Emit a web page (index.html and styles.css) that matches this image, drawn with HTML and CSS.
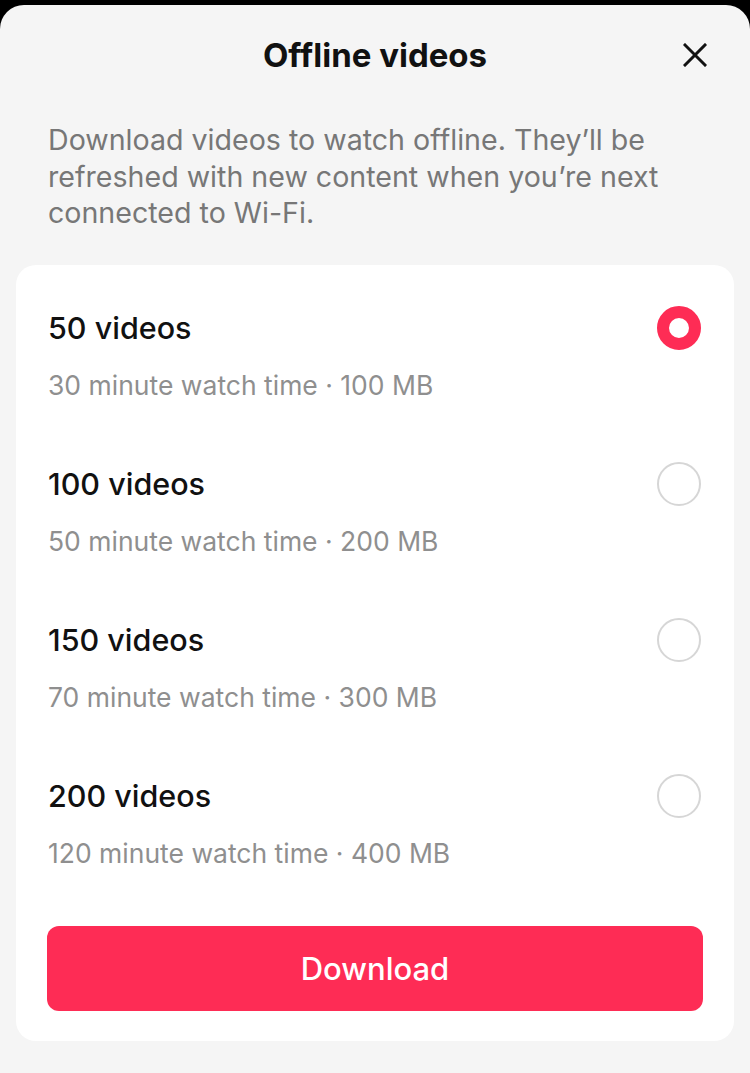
FILE: index.html
```html
<!DOCTYPE html>
<html lang="en">
<head>
<meta charset="utf-8">
<title>Offline videos</title>
<link rel="stylesheet" href="styles.css">
</head>
<body>
<div class="sheet">
  <header class="header">
    <h1 class="title">Offline videos</h1>
    <button class="close" aria-label="Close">
      <svg viewBox="0 0 24 24" width="24" height="24"><path d="M2 2 L22 22 M22 2 L2 22" stroke="#111" stroke-width="3" stroke-linecap="square" fill="none"/></svg>
    </button>
  </header>
  <p class="desc">Download videos to watch offline. They’ll be refreshed with new content when you’re next connected to Wi-Fi.</p>
  <section class="card">
    <div class="option">
      <div class="text">
        <div class="opt-title">50 videos</div>
        <div class="opt-sub">30 minute watch time · 100 MB</div>
      </div>
      <span class="radio selected"></span>
    </div>
    <div class="option">
      <div class="text">
        <div class="opt-title">100 videos</div>
        <div class="opt-sub">50 minute watch time · 200 MB</div>
      </div>
      <span class="radio"></span>
    </div>
    <div class="option">
      <div class="text">
        <div class="opt-title">150 videos</div>
        <div class="opt-sub">70 minute watch time · 300 MB</div>
      </div>
      <span class="radio"></span>
    </div>
    <div class="option">
      <div class="text">
        <div class="opt-title">200 videos</div>
        <div class="opt-sub">120 minute watch time · 400 MB</div>
      </div>
      <span class="radio"></span>
    </div>
    <button class="download">Download</button>
  </section>
</div>
</body>
</html>
```

FILE: styles.css
```css
html, body {
  margin: 0;
  padding: 0;
  background: #000;
  height: 100%;
}
body {
  font-family: Inter, Roboto, "Liberation Sans", sans-serif;
  padding-top: 5px;
  box-sizing: border-box;
}
.sheet {
  background: #f5f5f5;
  border-radius: 24px 24px 0 0;
  min-height: 1068px;
  padding-top: 30px;
  box-sizing: border-box;
}
.header {
  position: relative;
  height: 40px;
  display: flex;
  justify-content: center;
  align-items: center;
}
.title {
  margin: 0;
  font-size: 33px;
  line-height: 40px;
  font-weight: 700;
  color: #111;
}
.close {
  position: absolute;
  right: 43px;
  top: 8px;
  width: 24px;
  height: 24px;
  padding: 0;
  border: 0;
  background: none;
  display: flex;
}
.desc {
  margin: 47px 0 0;
  padding: 0 48px;
  font-size: 28.6px;
  line-height: 36.5px;
  color: #777;
}
.card {
  margin: 33px 16px 0;
  background: #fff;
  border-radius: 20px;
  padding: 27px 33px 30px 32px;
}
.option {
  display: flex;
  justify-content: space-between;
  align-items: flex-start;
  padding: 18px 0 47px;
}
.opt-title {
  font-size: 30.5px;
  line-height: 36px;
  font-weight: 500;
  color: #111;
}
.opt-sub {
  margin-top: 23px;
  font-size: 26.5px;
  line-height: 32px;
  color: #8f8f8f;
}
.radio {
  width: 44px;
  height: 44px;
  box-sizing: border-box;
  border-radius: 50%;
  border: 2px solid #d6d6d6;
  margin-top: -4px;
}
.radio.selected {
  border: 12.5px solid #fe2c55;
  background: #fff;
}
.download {
  display: block;
  width: 656px;
  margin: 10px 0 0 -1px;
  height: 85px;
  border: 0;
  border-radius: 12px;
  background: #fe2c55;
  color: #fff;
  font-family: inherit;
  font-size: 31px;
  font-weight: 500;
}
```
